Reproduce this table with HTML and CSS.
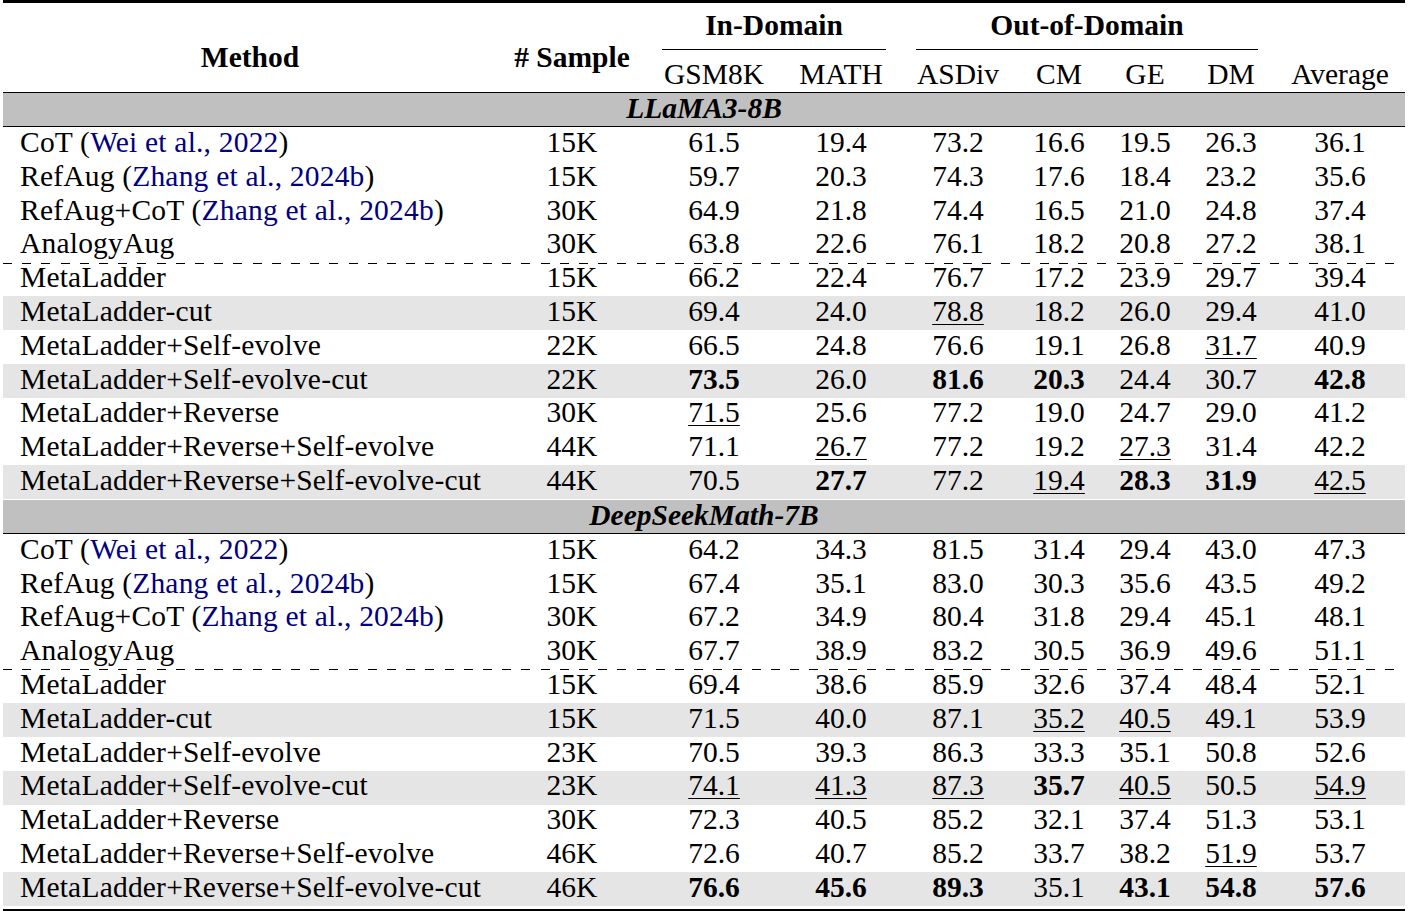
FILE: index.html
```html
<!DOCTYPE html>
<html>
<head>
<meta charset="utf-8">
<link rel="stylesheet" href="styles.css">
</head>
<body>
<div class="tbl">
  <div class="rule-top"></div>
  <div class="head">
    <div class="h-method">Method</div>
    <div class="h-sample"># Sample</div>
    <div class="h-in">In-Domain</div>
    <div class="h-out">Out-of-Domain</div>
    <div class="h2 c3">GSM8K</div>
    <div class="h2 c4">MATH</div>
    <div class="h2 c5">ASDiv</div>
    <div class="h2 c6">CM</div>
    <div class="h2 c7">GE</div>
    <div class="h2 c8">DM</div>
    <div class="h2 c9">Average</div>
  </div>
  <div class="rule-mid"></div>
  <div class="group">LLaMA3-8B</div>
  <div class="rule-thin"></div>

  <div class="r"><div class="m">CoT (<span class="cite">Wei et al., 2022</span>)</div><div>15K</div><div>61.5</div><div>19.4</div><div>73.2</div><div>16.6</div><div>19.5</div><div>26.3</div><div>36.1</div></div>
  <div class="r"><div class="m">RefAug (<span class="cite">Zhang et al., 2024b</span>)</div><div>15K</div><div>59.7</div><div>20.3</div><div>74.3</div><div>17.6</div><div>18.4</div><div>23.2</div><div>35.6</div></div>
  <div class="r"><div class="m">RefAug+CoT (<span class="cite">Zhang et al., 2024b</span>)</div><div>30K</div><div>64.9</div><div>21.8</div><div>74.4</div><div>16.5</div><div>21.0</div><div>24.8</div><div>37.4</div></div>
  <div class="r"><div class="m">AnalogyAug</div><div>30K</div><div>63.8</div><div>22.6</div><div>76.1</div><div>18.2</div><div>20.8</div><div>27.2</div><div>38.1</div></div>
  <div class="r dash"><div class="m">MetaLadder</div><div>15K</div><div>66.2</div><div>22.4</div><div>76.7</div><div>17.2</div><div>23.9</div><div>29.7</div><div>39.4</div></div>
  <div class="r hl"><div class="m">MetaLadder-cut</div><div>15K</div><div>69.4</div><div>24.0</div><div><span class="u">78.8</span></div><div>18.2</div><div>26.0</div><div>29.4</div><div>41.0</div></div>
  <div class="r"><div class="m">MetaLadder+Self-evolve</div><div>22K</div><div>66.5</div><div>24.8</div><div>76.6</div><div>19.1</div><div>26.8</div><div><span class="u">31.7</span></div><div>40.9</div></div>
  <div class="r hl"><div class="m">MetaLadder+Self-evolve-cut</div><div>22K</div><div class="b">73.5</div><div>26.0</div><div class="b">81.6</div><div class="b">20.3</div><div>24.4</div><div>30.7</div><div class="b">42.8</div></div>
  <div class="r"><div class="m">MetaLadder+Reverse</div><div>30K</div><div><span class="u">71.5</span></div><div>25.6</div><div>77.2</div><div>19.0</div><div>24.7</div><div>29.0</div><div>41.2</div></div>
  <div class="r"><div class="m">MetaLadder+Reverse+Self-evolve</div><div>44K</div><div>71.1</div><div><span class="u">26.7</span></div><div>77.2</div><div>19.2</div><div><span class="u">27.3</span></div><div>31.4</div><div>42.2</div></div>
  <div class="r hl"><div class="m">MetaLadder+Reverse+Self-evolve-cut</div><div>44K</div><div>70.5</div><div class="b">27.7</div><div>77.2</div><div><span class="u">19.4</span></div><div class="b">28.3</div><div class="b">31.9</div><div><span class="u">42.5</span></div></div>

  <div class="gap"></div>
  <div class="group">DeepSeekMath-7B</div>
  <div class="rule-thin"></div>

  <div class="r"><div class="m">CoT (<span class="cite">Wei et al., 2022</span>)</div><div>15K</div><div>64.2</div><div>34.3</div><div>81.5</div><div>31.4</div><div>29.4</div><div>43.0</div><div>47.3</div></div>
  <div class="r"><div class="m">RefAug (<span class="cite">Zhang et al., 2024b</span>)</div><div>15K</div><div>67.4</div><div>35.1</div><div>83.0</div><div>30.3</div><div>35.6</div><div>43.5</div><div>49.2</div></div>
  <div class="r"><div class="m">RefAug+CoT (<span class="cite">Zhang et al., 2024b</span>)</div><div>30K</div><div>67.2</div><div>34.9</div><div>80.4</div><div>31.8</div><div>29.4</div><div>45.1</div><div>48.1</div></div>
  <div class="r"><div class="m">AnalogyAug</div><div>30K</div><div>67.7</div><div>38.9</div><div>83.2</div><div>30.5</div><div>36.9</div><div>49.6</div><div>51.1</div></div>
  <div class="r dash"><div class="m">MetaLadder</div><div>15K</div><div>69.4</div><div>38.6</div><div>85.9</div><div>32.6</div><div>37.4</div><div>48.4</div><div>52.1</div></div>
  <div class="r hl"><div class="m">MetaLadder-cut</div><div>15K</div><div>71.5</div><div>40.0</div><div>87.1</div><div><span class="u">35.2</span></div><div><span class="u">40.5</span></div><div>49.1</div><div>53.9</div></div>
  <div class="r"><div class="m">MetaLadder+Self-evolve</div><div>23K</div><div>70.5</div><div>39.3</div><div>86.3</div><div>33.3</div><div>35.1</div><div>50.8</div><div>52.6</div></div>
  <div class="r hl"><div class="m">MetaLadder+Self-evolve-cut</div><div>23K</div><div><span class="u">74.1</span></div><div><span class="u">41.3</span></div><div><span class="u">87.3</span></div><div class="b">35.7</div><div><span class="u">40.5</span></div><div>50.5</div><div><span class="u">54.9</span></div></div>
  <div class="r"><div class="m">MetaLadder+Reverse</div><div>30K</div><div>72.3</div><div>40.5</div><div>85.2</div><div>32.1</div><div>37.4</div><div>51.3</div><div>53.1</div></div>
  <div class="r"><div class="m">MetaLadder+Reverse+Self-evolve</div><div>46K</div><div>72.6</div><div>40.7</div><div>85.2</div><div>33.7</div><div>38.2</div><div><span class="u">51.9</span></div><div>53.7</div></div>
  <div class="r hl"><div class="m">MetaLadder+Reverse+Self-evolve-cut</div><div>46K</div><div class="b">76.6</div><div class="b">45.6</div><div class="b">89.3</div><div>35.1</div><div class="b">43.1</div><div class="b">54.8</div><div class="b">57.6</div></div>

  <div class="rule-bottom"></div>
</div>
</body>
</html>
```

FILE: styles.css
```css
html, body {
  margin: 0;
  padding: 0;
  background: #ffffff;
}

body {
  font-family: "Liberation Serif", "Times New Roman", serif;
  font-size: 29.5px;
  color: #000000;
}

.tbl {
  width: 1402px;
  margin-left: 3px;
}

.rule-top {
  height: 2.6px;
  background: #000000;
}

.head,
.r {
  display: grid;
  grid-template-columns: 494px 150px 134px 120px 114px 88px 84px 88px 130px;
}

.head {
  line-height: 27.1px;
  text-align: center;
}

.h-method {
  grid-column: 1;
  grid-row: 1 / 3;
  font-weight: bold;
  padding-top: 41.5px;
}

.h-sample {
  grid-column: 2;
  grid-row: 1 / 3;
  font-weight: bold;
  padding-top: 41.5px;
}

.h-in,
.h-out {
  grid-row: 1;
  font-weight: bold;
  padding-top: 9px;
  padding-bottom: 10px;
  border-bottom: 1.2px solid #000000;
}

.h-in {
  grid-column: 3 / 5;
  margin: 0 15px;
}

.h-out {
  grid-column: 5 / 9;
  margin: 0 17px 0 15px;
}

.h2 {
  grid-row: 2;
  padding-top: 10.9px;
  padding-bottom: 4.2px;
}

.c3 { grid-column: 3; }
.c4 { grid-column: 4; }
.c5 { grid-column: 5; }
.c6 { grid-column: 6; }
.c7 { grid-column: 7; }
.c8 { grid-column: 8; }
.c9 { grid-column: 9; }

.rule-mid {
  height: 1.3px;
  background: #000000;
}

.rule-thin {
  height: 1.2px;
  background: #000000;
}

.group {
  box-sizing: border-box;
  height: 33px;
  padding-top: 2px;
  line-height: 27.1px;
  background: #c0c0c0;
  text-align: center;
  font-weight: bold;
  font-style: italic;
}

.gap {
  height: 1px;
}

.r {
  box-sizing: border-box;
  height: 33.8px;
  padding-top: 1.6px;
  line-height: 27.1px;
  text-align: center;
}

.r .m {
  text-align: left;
  padding-left: 17px;
  white-space: nowrap;
  letter-spacing: 0.2px;
}

.hl {
  background-color: #e5e5e5;
}

.dash {
  background-image: repeating-linear-gradient(to right, #000000 0, #000000 9px, transparent 9px, transparent 19.2px);
  background-size: 100% 1.3px;
  background-repeat: no-repeat;
  background-position: 0 0;
}

.cite {
  color: #000080;
}

.b {
  font-weight: bold;
}

.u {
  text-decoration: underline;
  text-decoration-thickness: 1px;
  text-underline-offset: 3px;
}

.rule-bottom {
  margin-top: 2.6px;
  height: 2.8px;
  background: #000000;
}
```
